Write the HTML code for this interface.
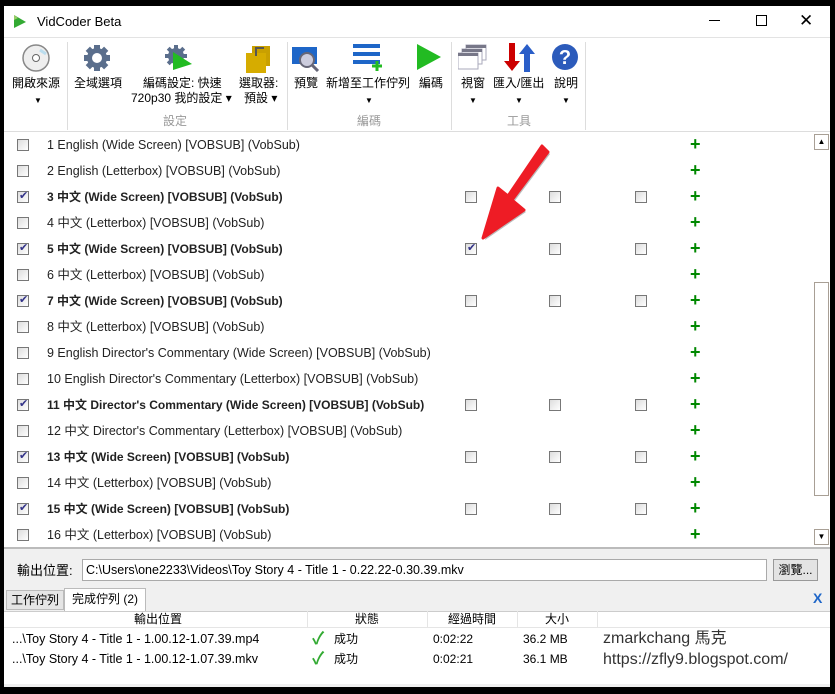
<!DOCTYPE html>
<html><head><meta charset="utf-8"><style>
*{margin:0;padding:0;box-sizing:border-box}
body{width:835px;height:694px;background:#000;position:relative;overflow:hidden;font-family:"Liberation Sans","Noto Sans CJK TC",sans-serif;font-size:12px;color:#000}
.a{position:absolute;line-height:15px}
.win{position:absolute;left:4px;top:6px;width:826px;height:681px;background:#fff;overflow:hidden}
.tb{font-size:12px;text-align:center;white-space:nowrap}
.grp{color:#999;font-size:12px}
.vs{position:absolute;width:1px;height:88px;background:#ddd}
.cb{position:absolute;width:12px;height:12px;border:1px solid #777;background:linear-gradient(135deg,#ddd,#fff)}
.row{position:absolute;left:47px;font-size:12.5px;line-height:14px;height:14px;white-space:nowrap;color:#222}
.b{font-weight:bold;font-size:12px}
.plus{position:absolute;left:690px;color:#080;font-weight:bold;font-size:18px;line-height:14px;margin-top:-2px}
.ck::after{content:"✔";position:absolute;left:1px;top:-3px;font-size:11px;line-height:14px;color:#338}
</style></head><body>
<div class="win">
 <svg class="a" style="left:8px;top:7px" width="16" height="16"><polygon points="2,2 14,9 2,15" fill="#3a3"/><polygon points="2,2 6,5 2,7" fill="#9c6"/></svg>
 <div class="a" style="left:33px;top:8px;font-size:13px">VidCoder Beta</div>
 <div class="a" style="left:705px;top:14px;width:11px;height:1px;background:#000"></div>
 <div class="a" style="left:752px;top:9px;width:11px;height:11px;border:1px solid #000"></div>
 <div class="a" style="left:795px;top:5px;font-size:17px;line-height:20px">✕</div>
 <div class="a" style="left:0;top:31px;width:826px;height:1px;background:#e3e3e3"></div>
</div>
<svg class="a" style="left:22px;top:44px" width="30" height="30"><circle cx="14" cy="14" r="13" fill="#eee" stroke="#888" stroke-width="1.5"/><circle cx="14" cy="14" r="3.5" fill="#fff" stroke="#666"/><path d="M18 6 L24 10" stroke="#bde" stroke-width="3"/></svg>
<div class="a tb" style="left:12px;top:76px">開啟來源</div><div class="a" style="left:34px;top:93px;font-size:8px">▼</div>
<div class="vs" style="left:67px;top:42px"></div>
<svg class="a" style="left:83px;top:44px" width="28" height="28"><g fill="#5a6e8c"><circle cx="14" cy="14" r="10"/><rect x="11" y="1" width="6" height="26"/><rect x="1" y="11" width="26" height="6"/><rect x="11" y="1" width="6" height="26" transform="rotate(45 14 14)"/><rect x="11" y="1" width="6" height="26" transform="rotate(-45 14 14)"/></g><circle cx="14" cy="14" r="5" fill="#fff"/></svg>
<div class="a tb" style="left:74px;top:76px">全域選項</div>
<svg class="a" style="left:164px;top:44px" width="30" height="28"><g fill="#5a6e8c"><circle cx="12" cy="12" r="8"/><rect x="10" y="1" width="4" height="22"/><rect x="1" y="10" width="22" height="4"/><rect x="10" y="1" width="4" height="22" transform="rotate(45 12 12)"/><rect x="10" y="1" width="4" height="22" transform="rotate(-45 12 12)"/></g><polygon points="9,8 28,20 9,26" fill="#2b2"/></svg>
<div class="a tb" style="left:143px;top:76px">編碼設定: 快速</div>
<div class="a tb" style="left:131px;top:91px">720p30 我的設定 ▾</div>
<svg class="a" style="left:244px;top:44px" width="30" height="30"><rect x="8" y="2" width="18" height="20" fill="#c9a000"/><rect x="2" y="9" width="20" height="20" fill="#d6ac00"/><path d="M12 12 V4 H20" stroke="#555" stroke-width="2" fill="none"/></svg>
<div class="a tb" style="left:239px;top:76px">選取器:</div><div class="a tb" style="left:244px;top:91px">預設 ▾</div>
<div class="a grp" style="left:163px;top:114px">設定</div>
<div class="vs" style="left:287px;top:42px"></div>
<svg class="a" style="left:292px;top:44px" width="28" height="28"><rect x="0" y="3" width="25" height="17" fill="#1e66c8"/><circle cx="15" cy="16" r="7" fill="#ccd" stroke="#667" stroke-width="2"/><path d="M20 21 L26 27" stroke="#667" stroke-width="3"/></svg>
<div class="a tb" style="left:294px;top:76px">預覽</div>
<svg class="a" style="left:353px;top:44px" width="32" height="28"><g fill="#1e66c8"><rect x="0" y="0" width="27" height="4"/><rect x="0" y="8" width="27" height="4"/><rect x="0" y="16" width="27" height="4"/></g><path d="M24 17 V27 M19 22 H29" stroke="#2b2" stroke-width="3"/></svg>
<div class="a tb" style="left:326px;top:76px">新增至工作佇列</div><div class="a" style="left:365px;top:93px;font-size:8px">▼</div>
<svg class="a" style="left:417px;top:44px" width="26" height="28"><polygon points="0,0 24,13 0,26" fill="#2b2"/></svg>
<div class="a tb" style="left:419px;top:76px">編碼</div>
<div class="a grp" style="left:357px;top:114px">編碼</div>
<div class="vs" style="left:451px;top:42px"></div>
<svg class="a" style="left:458px;top:44px" width="30" height="28"><g stroke="#aab" fill="#fff"><rect x="8" y="1" width="20" height="15"/><rect x="4" y="5" width="20" height="15"/><rect x="0" y="9" width="20" height="16"/></g><rect x="8" y="1" width="20" height="3" fill="#778"/><rect x="4" y="5" width="20" height="3" fill="#778"/><rect x="0" y="9" width="20" height="3" fill="#778"/></svg>
<div class="a tb" style="left:461px;top:76px">視窗</div><div class="a" style="left:469px;top:93px;font-size:8px">▼</div>
<svg class="a" style="left:503px;top:43px" width="32" height="30"><path d="M6 0 V18 H1 L9 28 L17 18 H12 V0Z" fill="#c00"/><path d="M21 29 V11 H16 L24 1 L32 11 H27 V29Z" fill="#2a5ec8"/></svg>
<div class="a tb" style="left:493px;top:76px">匯入/匯出</div><div class="a" style="left:515px;top:93px;font-size:8px">▼</div>
<svg class="a" style="left:551px;top:43px" width="28" height="28"><circle cx="14" cy="14" r="13" fill="#2c5bbb"/><text x="14" y="21" font-size="20" font-weight="bold" fill="#fff" text-anchor="middle" font-family="Liberation Sans">?</text></svg>
<div class="a tb" style="left:554px;top:76px">說明</div><div class="a" style="left:562px;top:93px;font-size:8px">▼</div>
<div class="a grp" style="left:507px;top:114px">工具</div>
<div class="vs" style="left:585px;top:42px"></div>
<div class="a" style="left:4px;top:131px;width:826px;height:1px;background:#ddd"></div>

<div class="cb" style="left:17px;top:139px"></div><div class="row" style="top:138px">1 English (Wide Screen) [VOBSUB] (VobSub)</div>
<div class="cb" style="left:17px;top:165px"></div><div class="row" style="top:164px">2 English (Letterbox) [VOBSUB] (VobSub)</div>
<div class="cb ck" style="left:17px;top:191px"></div><div class="row b" style="top:190px">3 中文 (Wide Screen) [VOBSUB] (VobSub)</div>
<div class="cb" style="left:17px;top:217px"></div><div class="row" style="top:216px">4 中文 (Letterbox) [VOBSUB] (VobSub)</div>
<div class="cb ck" style="left:17px;top:243px"></div><div class="row b" style="top:242px">5 中文 (Wide Screen) [VOBSUB] (VobSub)</div>
<div class="cb" style="left:17px;top:269px"></div><div class="row" style="top:268px">6 中文 (Letterbox) [VOBSUB] (VobSub)</div>
<div class="cb ck" style="left:17px;top:295px"></div><div class="row b" style="top:294px">7 中文 (Wide Screen) [VOBSUB] (VobSub)</div>
<div class="cb" style="left:17px;top:321px"></div><div class="row" style="top:320px">8 中文 (Letterbox) [VOBSUB] (VobSub)</div>
<div class="cb" style="left:17px;top:347px"></div><div class="row" style="top:346px">9 English Director's Commentary (Wide Screen) [VOBSUB] (VobSub)</div>
<div class="cb" style="left:17px;top:373px"></div><div class="row" style="top:372px">10 English Director's Commentary (Letterbox) [VOBSUB] (VobSub)</div>
<div class="cb ck" style="left:17px;top:399px"></div><div class="row b" style="top:398px">11 中文 Director's Commentary (Wide Screen) [VOBSUB] (VobSub)</div>
<div class="cb" style="left:17px;top:425px"></div><div class="row" style="top:424px">12 中文 Director's Commentary (Letterbox) [VOBSUB] (VobSub)</div>
<div class="cb ck" style="left:17px;top:451px"></div><div class="row b" style="top:450px">13 中文 (Wide Screen) [VOBSUB] (VobSub)</div>
<div class="cb" style="left:17px;top:477px"></div><div class="row" style="top:476px">14 中文 (Letterbox) [VOBSUB] (VobSub)</div>
<div class="cb ck" style="left:17px;top:503px"></div><div class="row b" style="top:502px">15 中文 (Wide Screen) [VOBSUB] (VobSub)</div>
<div class="cb" style="left:17px;top:529px"></div><div class="row" style="top:528px">16 中文 (Letterbox) [VOBSUB] (VobSub)</div>

<div class="cb" style="left:465px;top:191px"></div><div class="cb" style="left:549px;top:191px"></div><div class="cb" style="left:635px;top:191px"></div>
<div class="cb ck" style="left:465px;top:243px"></div><div class="cb" style="left:549px;top:243px"></div><div class="cb" style="left:635px;top:243px"></div>
<div class="cb" style="left:465px;top:295px"></div><div class="cb" style="left:549px;top:295px"></div><div class="cb" style="left:635px;top:295px"></div>
<div class="cb" style="left:465px;top:399px"></div><div class="cb" style="left:549px;top:399px"></div><div class="cb" style="left:635px;top:399px"></div>
<div class="cb" style="left:465px;top:451px"></div><div class="cb" style="left:549px;top:451px"></div><div class="cb" style="left:635px;top:451px"></div>
<div class="cb" style="left:465px;top:503px"></div><div class="cb" style="left:549px;top:503px"></div><div class="cb" style="left:635px;top:503px"></div>

<div class="plus" style="top:139px">+</div><div class="plus" style="top:165px">+</div><div class="plus" style="top:191px">+</div><div class="plus" style="top:217px">+</div><div class="plus" style="top:243px">+</div><div class="plus" style="top:269px">+</div><div class="plus" style="top:295px">+</div><div class="plus" style="top:321px">+</div><div class="plus" style="top:347px">+</div><div class="plus" style="top:373px">+</div><div class="plus" style="top:399px">+</div><div class="plus" style="top:425px">+</div><div class="plus" style="top:451px">+</div><div class="plus" style="top:477px">+</div><div class="plus" style="top:503px">+</div><div class="plus" style="top:529px">+</div>

<svg class="a" style="left:478px;top:140px" width="80" height="110"><g transform="translate(2,2)" fill="#bbb"><path d="M64 6 L70 12 L34 60 L46 70 L5 98 L20 48 L30 56Z"/></g><path d="M64 6 L70 12 L34 60 L46 70 L5 98 L20 48 L30 56Z" fill="#ee1c25" stroke="#ee1c25" stroke-width="3" stroke-linejoin="round"/></svg>

<div class="a" style="left:814px;top:134px;width:15px;height:16px;border:1px solid #a89f95;background:#fff;font-size:8px;text-align:center;line-height:13px">▲</div>
<div class="a" style="left:814px;top:282px;width:15px;height:214px;border:1px solid #a89f95;background:#fff"></div>
<div class="a" style="left:814px;top:529px;width:15px;height:16px;border:1px solid #a89f95;background:#fff;font-size:8px;text-align:center;line-height:13px">▼</div>

<div class="a" style="left:4px;top:547px;width:826px;height:140px;background:#f0f0f0;border-top:2px solid #bbb"></div>
<div class="a" style="left:17px;top:563px;font-size:13px">輸出位置:</div>
<div class="a" style="left:82px;top:559px;width:685px;height:22px;background:#fff;border:1px solid #aaa;padding:3px 3px;font-size:12.5px;white-space:nowrap">C:\Users\one2233\Videos\Toy Story 4 - Title 1 - 0.22.22-0.30.39.mkv</div>
<div class="a" style="left:773px;top:559px;width:45px;height:22px;border:1px solid #999;background:#e3e3e3;font-size:12px;text-align:center;line-height:20px">瀏覽...</div>
<div class="a" style="left:6px;top:590px;width:58px;height:20px;border:1px solid #bbb;background:#e5e5e5;font-size:12px;text-align:center;line-height:18px">工作佇列</div>
<div class="a" style="left:64px;top:588px;width:82px;height:23px;border:1px solid #bbb;border-bottom:none;background:#fff;font-size:12px;text-align:center;line-height:20px">完成佇列 (2)</div>
<div class="a" style="left:813px;top:591px;color:#1e66c8;font-weight:bold;font-size:14px">X</div>
<div class="a" style="left:4px;top:611px;width:826px;height:73px;background:#fff;border-top:1px solid #ccc"></div>
<div class="a" style="left:4px;top:611px;width:826px;height:17px;border-bottom:1px solid #e5e5e5"></div>
<div class="a" style="left:307px;top:611px;width:1px;height:16px;background:#e5e5e5"></div>
<div class="a" style="left:427px;top:611px;width:1px;height:16px;background:#e5e5e5"></div>
<div class="a" style="left:517px;top:611px;width:1px;height:16px;background:#e5e5e5"></div>
<div class="a" style="left:597px;top:611px;width:1px;height:16px;background:#e5e5e5"></div>
<div class="a" style="left:134px;top:612px">輸出位置</div>
<div class="a" style="left:355px;top:612px">狀態</div>
<div class="a" style="left:448px;top:612px">經過時間</div>
<div class="a" style="left:545px;top:612px">大小</div>
<div class="a" style="left:12px;top:632px;font-size:12.5px">...\Toy Story 4 - Title 1 - 1.00.12-1.07.39.mp4</div>
<div class="a" style="left:12px;top:652px;font-size:12.5px">...\Toy Story 4 - Title 1 - 1.00.12-1.07.39.mkv</div>
<div class="a" style="left:312px;top:630px;color:#3a3;font-size:17px;font-weight:bold;line-height:18px">✓</div><div class="a" style="left:334px;top:632px">成功</div>
<div class="a" style="left:312px;top:650px;color:#3a3;font-size:17px;font-weight:bold;line-height:18px">✓</div><div class="a" style="left:334px;top:652px">成功</div>
<div class="a" style="left:433px;top:632px">0:02:22</div><div class="a" style="left:433px;top:652px">0:02:21</div>
<div class="a" style="left:523px;top:632px">36.2 MB</div><div class="a" style="left:523px;top:652px">36.1 MB</div>
<div class="a" style="left:603px;top:630px;font-size:16px;line-height:18px;color:#333">zmarkchang 馬克</div>
<div class="a" style="left:603px;top:651px;font-size:16px;line-height:18px;color:#333">https://zfly9.blogspot.com/</div>
</body></html>
